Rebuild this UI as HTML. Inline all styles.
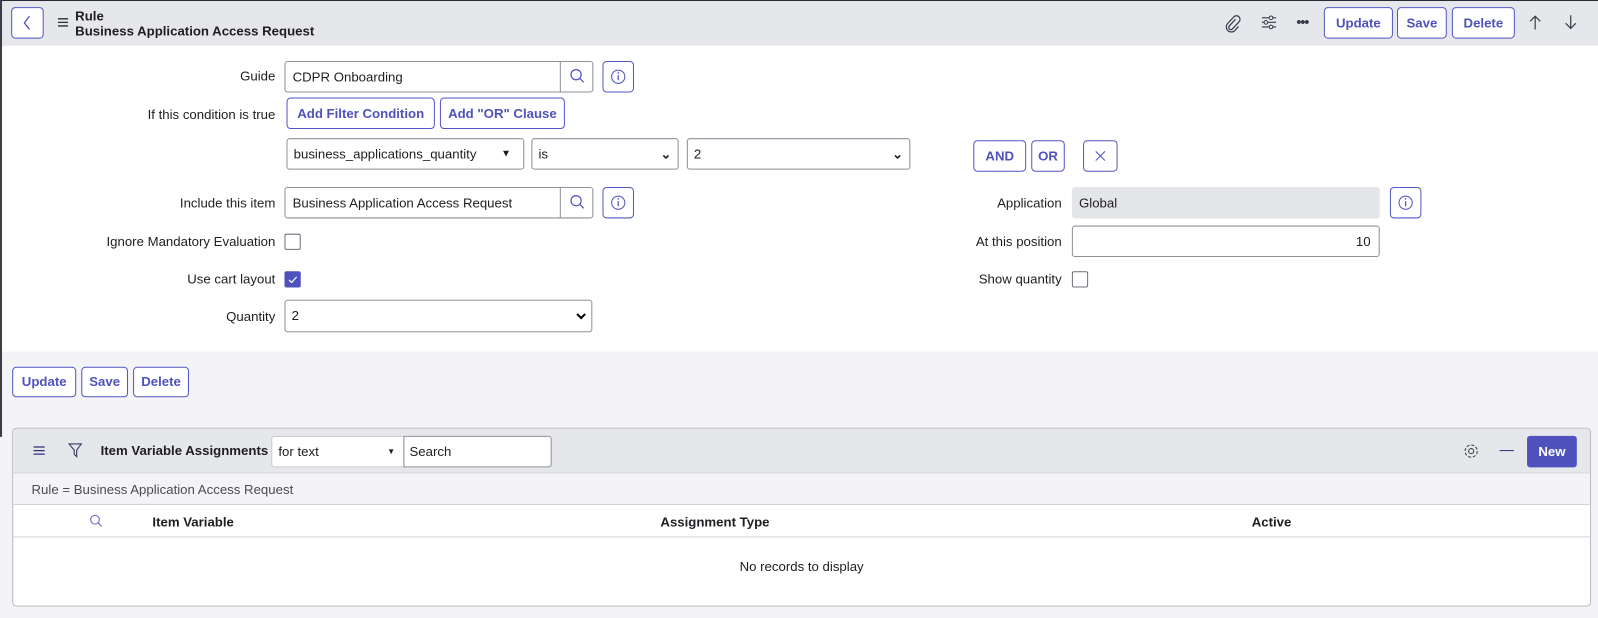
<!DOCTYPE html>
<html><head><meta charset="utf-8">
<style>
*{box-sizing:border-box;margin:0;padding:0}
html,body{width:1598px;height:617px;overflow:hidden;background:#f4f4f6;font-family:"Liberation Sans",sans-serif;font-size:13px;color:#1e1e22}
#w{position:absolute;left:0;top:0;width:1573px;height:608px;transform:scale(1.016);transform-origin:0 0;background:#f4f4f6}
.a{position:absolute}
.hdr{left:0;top:0;width:1573px;height:45px;background:#e6e7eb;border-top:1px solid #2a2a33}
.form{left:0;top:45px;width:1573px;height:301px;background:#fff}
.lb{position:absolute;text-align:right;width:260px;line-height:16px}
.btn{position:absolute;border:1px solid #5256c3;border-radius:4px;background:#fff;color:#4f52bd;font-weight:bold;text-align:center;font-size:13px}
.inp{position:absolute;border:1px solid #8e8f99;border-radius:3px;background:#fff;padding-left:7px}
.cb{position:absolute;width:16px;height:16px;border:1px solid #6e6f78;border-radius:2px;background:#fff}
.sel{position:absolute;border:1px solid #8e8f99;border-radius:3px;background:#fff;padding-left:6px}
</style></head><body><div id="w">
<div class="a" style="left:0;top:0;width:2px;height:430px;background:#3d3d48;z-index:5"></div>
<div class="a hdr"></div>
<div class="btn" style="left:11px;top:7px;width:32px;height:31px"><svg width="30" height="29" viewBox="0 0 30 29"><path d="M17 8l-5 6.5 5 6.5" fill="none" stroke="#4f52bd" stroke-width="1.3"/></svg></div>
<svg class="a" style="left:57px;top:17px" width="11" height="10"><path d="M0 1.5h10M0 5h10M0 8.5h10" stroke="#2b2b35" stroke-width="1.3"/></svg>
<div class="a" style="left:74px;top:8px;font-weight:bold;font-size:13px;line-height:15px">Rule<br>Business Application Access Request</div>
<svg class="a" style="left:1205px;top:14px" width="16" height="18" viewBox="0 0 16 18"><path d="M11 5l-6 6.5a2 2 0 0 0 3 3l6.5-7a3.5 3.5 0 0 0-5-5L3 9.5a5 5 0 0 0 7 7l4-4.5" fill="none" stroke="#3a3a48" stroke-width="1.2"/></svg>
<svg class="a" style="left:1241px;top:15px" width="16" height="14"><path d="M1 2.5h14M1 7h14M1 11.5h14" stroke="#3a3a48" stroke-width="1.1"/><circle cx="10" cy="2.5" r="1.8" fill="#e6e7eb" stroke="#3a3a48"/><circle cx="5" cy="7" r="1.8" fill="#e6e7eb" stroke="#3a3a48"/><circle cx="10" cy="11.5" r="1.8" fill="#e6e7eb" stroke="#3a3a48"/></svg>
<div class="a" style="left:1276px;top:13px;font-size:14px;font-weight:bold;color:#3a3a48;letter-spacing:-1px">•••</div>
<div class="btn" style="left:1303px;top:7px;width:68px;height:31px;line-height:29px">Update</div>
<div class="btn" style="left:1375px;top:7px;width:49px;height:31px;line-height:29px">Save</div>
<div class="btn" style="left:1429px;top:7px;width:62px;height:31px;line-height:29px">Delete</div>
<svg class="a" style="left:1504px;top:14px" width="14" height="16"><path d="M7 15V2M2 7l5-5 5 5" fill="none" stroke="#3a3a48" stroke-width="1.2"/></svg>
<svg class="a" style="left:1539px;top:14px" width="14" height="16"><path d="M7 1v13M2 9l5 5 5-5" fill="none" stroke="#3a3a48" stroke-width="1.2"/></svg>

<div class="a form"></div>
<div class="lb" style="left:11px;top:67px">Guide</div>
<div class="inp" style="left:280px;top:60px;width:304px;height:31px;line-height:29px">CDPR Onboarding</div>
<div class="a" style="left:551px;top:60px;width:33px;height:31px;border-left:1px solid #8e8f99"><svg width="32" height="31"><circle cx="15" cy="13.5" r="5" fill="none" stroke="#4f52bd" stroke-width="1.2"/><path d="M18.5 17l4 4" stroke="#4f52bd" stroke-width="1.2"/></svg></div>
<div class="btn" style="left:593px;top:60px;width:31px;height:31px"><svg width="29" height="29"><circle cx="14.5" cy="14.5" r="6.5" fill="none" stroke="#4f52bd"/><path d="M14.5 13v5" stroke="#4f52bd" stroke-width="1.2"/><circle cx="14.5" cy="10.8" r=".8" fill="#4f52bd"/></svg></div>

<div class="lb" style="left:11px;top:105px">If this condition is true</div>
<div class="btn" style="left:282px;top:96px;width:146px;height:31px;line-height:29px">Add Filter Condition</div>
<div class="btn" style="left:433px;top:96px;width:123px;height:31px;line-height:29px">Add "OR" Clause</div>
<div class="sel" style="left:282px;top:136px;width:234px;height:31px;line-height:29px">business_applications_quantity<span style="position:absolute;right:12px;font-size:10px">▼</span></div>
<div class="sel" style="left:523px;top:136px;width:145px;height:31px;line-height:29px">is<span style="position:absolute;right:6px;font-weight:bold">⌄</span></div>
<div class="sel" style="left:676px;top:136px;width:220px;height:31px;line-height:29px">2<span style="position:absolute;right:6px;font-weight:bold">⌄</span></div>
<div class="btn" style="left:958px;top:138px;width:52px;height:31px;line-height:29px">AND</div>
<div class="btn" style="left:1015px;top:138px;width:33px;height:31px;line-height:29px">OR</div>
<div class="btn" style="left:1066px;top:138px;width:34px;height:31px"><svg width="32" height="29"><path d="M11.5 10l9 9M20.5 10l-9 9" stroke="#4f52bd" stroke-width="1"/></svg></div>

<div class="lb" style="left:11px;top:192px">Include this item</div>
<div class="inp" style="left:280px;top:184px;width:304px;height:31px;line-height:29px">Business Application Access Request</div>
<div class="a" style="left:551px;top:184px;width:33px;height:31px;border-left:1px solid #8e8f99"><svg width="32" height="31"><circle cx="15" cy="13.5" r="5" fill="none" stroke="#4f52bd" stroke-width="1.2"/><path d="M18.5 17l4 4" stroke="#4f52bd" stroke-width="1.2"/></svg></div>
<div class="btn" style="left:593px;top:184px;width:31px;height:31px"><svg width="29" height="29"><circle cx="14.5" cy="14.5" r="6.5" fill="none" stroke="#4f52bd"/><path d="M14.5 13v5" stroke="#4f52bd" stroke-width="1.2"/><circle cx="14.5" cy="10.8" r=".8" fill="#4f52bd"/></svg></div>
<div class="lb" style="left:785px;top:192px">Application</div>
<div class="a" style="left:1055px;top:184px;width:303px;height:31px;background:#e4e5e9;border-radius:3px;padding-left:7px;line-height:31px">Global</div>
<div class="btn" style="left:1368px;top:184px;width:31px;height:31px"><svg width="29" height="29"><circle cx="14.5" cy="14.5" r="6.5" fill="none" stroke="#4f52bd"/><path d="M14.5 13v5" stroke="#4f52bd" stroke-width="1.2"/><circle cx="14.5" cy="10.8" r=".8" fill="#4f52bd"/></svg></div>

<div class="lb" style="left:11px;top:230px">Ignore Mandatory Evaluation</div>
<div class="cb" style="left:280px;top:230px"></div>
<div class="lb" style="left:785px;top:230px">At this position</div>
<div class="inp" style="left:1055px;top:222px;width:303px;height:31px;line-height:29px;text-align:right;padding-right:8px">10</div>

<div class="lb" style="left:11px;top:267px">Use cart layout</div>
<div class="cb" style="left:280px;top:267px;background:#4f52bd;border-color:#4f52bd"><svg width="14" height="14"><path d="M3.5 7.5l2.5 2.5 5-5.5" fill="none" stroke="#fff" stroke-width="1.2"/></svg></div>
<div class="lb" style="left:785px;top:267px">Show quantity</div>
<div class="cb" style="left:1055px;top:267px"></div>

<div class="lb" style="left:11px;top:304px">Quantity</div>
<div class="sel" style="left:280px;top:295px;width:303px;height:32px;line-height:30px">2<svg style="position:absolute;right:5px;top:12px" width="10" height="7"><path d="M1 1l4 4 4-4" fill="none" stroke="#000" stroke-width="2"/></svg></div>

<div class="btn" style="left:12px;top:361px;width:63px;height:30px;line-height:28px">Update</div>
<div class="btn" style="left:80px;top:361px;width:46px;height:30px;line-height:28px">Save</div>
<div class="btn" style="left:131px;top:361px;width:55px;height:30px;line-height:28px">Delete</div>

<div class="a" style="left:12px;top:421px;width:1554px;height:176px;border:1px solid #b9bac2;border-radius:4px;background:#fff;overflow:hidden">
 <div class="a" style="left:0;top:0;width:1552px;height:44px;background:#e6e7eb;border-bottom:1px solid #d6d7dd"></div>
 <svg class="a" style="left:20px;top:17px" width="12" height="10"><path d="M0 1h11M0 4.5h11M0 8h11" stroke="#2e2f7a" stroke-width="1.2"/></svg>
 <svg class="a" style="left:54px;top:14px" width="14" height="15"><path d="M1 1h12L8.5 7v6.5L6 11V7z" fill="none" stroke="#3a3a60" stroke-width="1.1"/></svg>
 <div class="a" style="left:86px;top:14px;font-weight:bold">Item Variable Assignments</div>
 <div class="a" style="left:254px;top:7px;width:131px;height:31px;background:#fff;border:1px solid #c8c9d0;border-radius:3px 0 0 3px;padding-left:6px;line-height:29px">for text<span style="position:absolute;right:8px;font-size:8px">▼</span></div>
 <div class="a" style="left:384px;top:7px;width:146px;height:31px;background:#fff;border:1px solid #8e8f99;border-radius:0 3px 3px 0;padding-left:5px;line-height:29px">Search</div>
 <svg class="a" style="left:1427px;top:14px" width="16" height="16"><circle cx="8" cy="8" r="2.5" fill="none" stroke="#3a3a48"/><circle cx="8" cy="8" r="6" fill="none" stroke="#3a3a48" stroke-dasharray="3 1.7"/></svg>
 <div class="a" style="left:1463px;top:21px;width:14px;height:1.3px;background:#2e2f7a"></div>
 <div class="a" style="left:1490px;top:7px;width:49px;height:31px;background:#4f52bd;border-radius:3px;color:#fff;font-weight:bold;text-align:center;line-height:31px">New</div>
 <div class="a" style="left:0;top:44px;width:1552px;height:31px;background:#f4f4f6;border-bottom:1px solid #d1d2d8"></div>
 <div class="a" style="left:18px;top:52px;color:#4a4a55">Rule = Business Application Access Request</div>
 <div class="a" style="left:0;top:106px;width:1552px;height:1px;background:#d1d2d8"></div>
 <svg class="a" style="left:75px;top:84px" width="14" height="14"><circle cx="5.5" cy="5.5" r="4.3" fill="none" stroke="#6e70c8" stroke-width="1.1"/><path d="M8.7 8.7l3.5 3.5" stroke="#6e70c8" stroke-width="1.1"/></svg>
 <div class="a" style="left:137px;top:84px;font-weight:bold">Item Variable</div>
 <div class="a" style="left:637px;top:84px;font-weight:bold">Assignment Type</div>
 <div class="a" style="left:1219px;top:84px;font-weight:bold">Active</div>
 <div class="a" style="left:0;top:128px;width:1552px;text-align:center">No records to display</div>
</div>
</div></body></html>
